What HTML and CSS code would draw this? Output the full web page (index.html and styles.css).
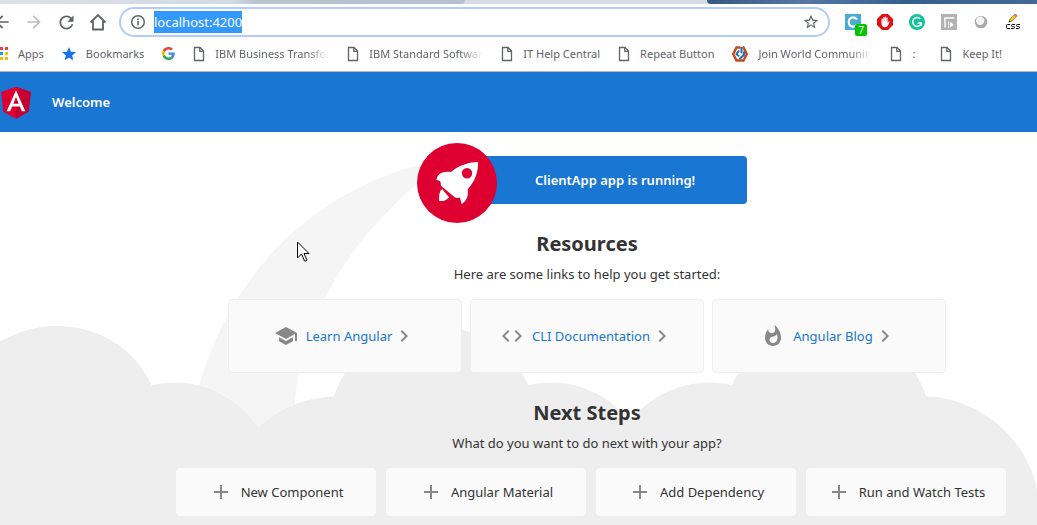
FILE: index.html
```
<!DOCTYPE html>
<html lang="en">
<head>
<meta charset="utf-8">
<meta name="viewport" content="width=device-width, initial-scale=1">
<title>ClientApp</title>
<link rel="stylesheet" href="styles.css">
</head>
<body>
	<svg class="defs" width="0" height="0">
		<symbol id="page" viewBox="0 0 12 16">
			<path d="M1.500 1.500h5.500l3.500 3.500v9.500h-9z" fill="#fff" stroke="#5f6368" stroke-width="1.300"/>
			<path d="M6.800 1.500v3.800h3.700" fill="none" stroke="#5f6368" stroke-width="1.300"/>
		</symbol>
		<symbol id="chevron" viewBox="0 0 24 24">
			<path d="M10 6L8.590 7.410 13.170 12l-4.580 4.590L10 18l6-6z"/>
		</symbol>
		<symbol id="plus" viewBox="0 0 24 24">
			<path d="M19 13h-6v6h-2v-6H5v-2h6V5h2v6h6v2z"/>
		</symbol>
	</svg>

	<header class="browser">
		<div class="tabs">
			<div class="tab tab-left"></div>
			<div class="tab-active"></div>
			<div class="tab tab-right"></div>
		</div>
		<div class="nav-row">
			<button class="nav-btn" aria-label="Back">
				<svg width="20" height="20" viewBox="0 0 24 24" fill="#5f6368"><path d="M20 11H7.830l5.590-5.590L12 4l-8 8 8 8 1.410-1.410L7.830 13H20v-2z"/></svg>
			</button>
			<button class="nav-btn" aria-label="Forward">
				<svg width="20" height="20" viewBox="0 0 24 24" fill="#babcbe"><path d="M12 4l-1.410 1.410L16.170 11H4v2h12.170l-5.580 5.590L12 20l8-8z"/></svg>
			</button>
			<button class="nav-btn" aria-label="Reload">
				<svg width="21" height="21" viewBox="0 0 24 24" fill="#5f6368"><path d="M17.650 6.350C16.200 4.900 14.210 4 12 4c-4.420 0-7.990 3.580-7.990 8s3.570 8 7.990 8c3.730 0 6.840-2.550 7.730-6h-2.080c-.820 2.330-3.040 4-5.650 4-3.310 0-6-2.690-6-6s2.690-6 6-6c1.660 0 3.140.690 4.220 1.780L13 11h7V4l-2.350 2.350z"/></svg>
			</button>
			<button class="nav-btn" aria-label="Home">
				<svg width="20" height="20" viewBox="0 0 20 20" fill="none" stroke="#5f6368" stroke-width="1.800"><path d="M2.500 10.500L10 3l7.500 7.500M5 9v8.500h10V9"/></svg>
			</button>
			<div class="omnibox">
				<svg width="16" height="16" viewBox="0 0 16 16"><circle cx="8" cy="8" r="6.300" fill="none" stroke="#5f6368" stroke-width="1.500"/><path d="M7.200 7h1.600v4.500H7.200zM7.200 4.300h1.600v1.600H7.200z" fill="#5f6368"/></svg>
				<span class="url" role="textbox" aria-label="Address">localhost:4200</span>
				<button class="star" aria-label="Bookmark this page">
					<svg width="16" height="16" viewBox="1 1 22 22" fill="#5f6368"><path d="M22 9.240l-7.190-.620L12 2 9.190 8.630 2 9.240l5.460 4.730L5.820 21 12 17.270 18.180 21l-1.630-7.030L22 9.240zM12 15.400l-3.760 2.270 1-4.280-3.320-2.880 4.380-.380L12 6.100l1.710 4.040 4.380.380-3.320 2.880 1 4.280L12 15.400z"/></svg>
				</button>
			</div>
			<div class="extensions">
				<button class="ext" aria-label="Page checker">
					<svg width="16" height="16" viewBox="0 0 16 16"><path fill="#4aacd4" d="M0 0h16v16H0z"/><path d="M12 5.500C11 3.800 9.500 3.400 8 3.400c-2.600 0-4.200 1.900-4.200 4.600s1.600 4.600 4.200 4.600c1.500 0 3-.400 4-2" fill="none" stroke="#fff" stroke-width="2.200"/></svg>
					<span class="badge">7</span>
				</button>
				<button class="ext" aria-label="Ad blocker">
					<svg width="16" height="16" viewBox="0 0 16 16"><path fill="#e40d12" d="M5 0h6l5 5v6l-5 5H5l-5-5V5z"/><path fill="#fff" d="M4.500 5q.700-.800 1.300 0v2.500h.300V3.500q.700-.900 1.300 0v3.500h.300V3q.700-.900 1.300 0v4h.300V3.700q.700-.800 1.300 0v5l.900-1.300q.900-.500 1 .300L11 11.500q-.900 1.800-3 1.800-3.500 0-3.500-3.800z"/></svg>
				</button>
				<button class="ext" aria-label="Grammar checker">
					<svg width="16" height="16" viewBox="0 0 16 16"><circle cx="8" cy="8" r="8" fill="#15c39a"/><path d="M11.300 5A4.400 4.400 0 1 0 12.300 9.300M8.800 9h3.500v2.800" fill="none" stroke="#fff" stroke-width="1.500"/></svg>
				</button>
				<button class="ext" aria-label="Recorder">
					<svg width="16" height="16" viewBox="0 0 16 16"><path fill="#b2b2b2" d="M0 0h16v16H0z"/><path d="M4 13.500V4H13.500" fill="none" stroke="#fff" stroke-width="1.400"/><path d="M7.500 14V7" fill="none" stroke="#e8e8e8"/><path d="M9 8l4 2.700-4 2.700z" fill="#fff"/></svg>
				</button>
				<button class="ext" aria-label="Bubble">
					<svg width="16" height="16" viewBox="0 0 16 16"><circle cx="8" cy="8" r="6.300" fill="#a9a9a9"/><circle cx="7.200" cy="6.800" r="4.200" fill="#f4f4f4"/></svg>
				</button>
				<button class="ext" aria-label="CSS editor">
					<svg width="16" height="16" viewBox="0 0 16 16"><path d="M4 8l1-3 5-5 2 2-5 5z" fill="#f7c81e" stroke="#7a5b08" stroke-width=".600"/><path d="M9 1l1.500-1.500 2 2L11 3z" fill="#e06c7c"/><path d="M3.500 8.500l1-2 1 1z"/><path d="M5 10.500H2.500q-1 0-1 1V13.500q0 1 1 1H5M10 10.500H7.500q-1 0-1 1t1 1h1q1 0 1 1t-1 1H6M15 10.500h-2.500q-1 0-1 1t1 1h1q1 0 1 1t-1 1H11" fill="none" stroke="#000"/></svg>
				</button>
			</div>
		</div>
		<nav class="bookmarks">
			<a class="bookmark" href="#">
				<svg width="8" height="13" viewBox="0 0 8 13"><path fill="#ea4335" d="M0 0h3v3H0zM5 0h3v3H5z"/><path fill="#1a9af5" d="M0 5h3v3H0z"/><path fill="#fbbc05" d="M5 5h3v3H5zM0 10h3v3H0zM5 10h3v3H5z"/></svg>
				<span>Apps</span>
			</a>
			<a class="bookmark" href="#">
				<svg width="14" height="14" viewBox="2 2 20 20" fill="#1a73e8"><path d="M12 17.270L18.180 21l-1.640-7.030L22 9.240l-7.190-.610L12 2 9.190 8.630 2 9.240l5.460 4.730L5.820 21z"/></svg>
				<span>Bookmarks</span>
			</a>
			<a class="bookmark" href="#" aria-label="Google">
				<svg width="13" height="13" viewBox="0 0 48 48"><path fill="#ea4335" d="M24 9.500c3.540 0 6.710 1.220 9.210 3.600l6.850-6.850C35.900 2.380 30.470 0 24 0 14.620 0 6.510 5.380 2.560 13.220l7.980 6.190C12.430 13.720 17.740 9.500 24 9.500z"/><path fill="#4285f4" d="M46.980 24.550c0-1.570-.150-3.090-.380-4.550H24v9.020h12.940c-.580 2.960-2.260 5.480-4.780 7.180l7.730 6c4.510-4.180 7.090-10.360 7.090-17.650z"/><path fill="#fbbc05" d="M10.530 28.590A14.500 14.500 0 0 1 9.770 24c0-1.600.270-3.140.760-4.590l-7.980-6.190A23.900 23.900 0 0 0 0 24c0 3.880.920 7.540 2.560 10.780l7.970-6.190z"/><path fill="#34a853" d="M24 48c6.480 0 11.930-2.130 15.890-5.810l-7.730-6c-2.150 1.450-4.920 2.300-8.160 2.300-6.260 0-11.570-4.220-13.470-9.910l-7.980 6.190C6.510 42.620 14.620 48 24 48z"/></svg>
			</a>
			<a class="bookmark" href="#"><svg width="12" height="16"><use href="#page"/></svg><span class="fade">IBM Business Transformation</span></a>
			<a class="bookmark" href="#"><svg width="12" height="16"><use href="#page"/></svg><span class="fade">IBM Standard Software</span></a>
			<a class="bookmark" href="#"><svg width="12" height="16"><use href="#page"/></svg><span>IT Help Central</span></a>
			<a class="bookmark" href="#"><svg width="12" height="16"><use href="#page"/></svg><span>Repeat Button</span></a>
			<a class="bookmark" href="#">
				<svg width="16" height="16" viewBox="0 0 16 16"><path d="M7 14.500H4.500L1.200 8l3.300-6.500H8.500" fill="none" stroke="#c9471c" stroke-width="2.400"/><path d="M10.500 1.500h1L14.800 8l-3.300 6.500H7" fill="none" stroke="#c9471c" stroke-width="2.400"/><path d="M9.500 1v6.300M7 4.500L4.500 8 7 10.400M12 5.500v3.200L7.500 13" fill="none" stroke="#1b6fb0" stroke-width="2"/></svg>
				<span class="fade">Join World Community Grid</span>
			</a>
			<a class="bookmark" href="#"><svg width="12" height="16"><use href="#page"/></svg><span class="short">:</span></a>
			<a class="bookmark" href="#"><svg width="12" height="16"><use href="#page"/></svg><span>Keep It!</span></a>
		</nav>
	</header>

	<div class="app">
		<div class="toolbar">
			<svg class="logo" width="40" height="40" viewBox="0 0 250 250">
				<path fill="#dd0031" d="M125 30L31.900 63.200l14.200 123.100L125 230l78.900-43.700 14.200-123.100z"/>
				<path fill="#c3002f" d="M125 30v200l78.900-43.700 14.200-123.100z"/>
				<path fill="#fff" d="M125 52.100L66.800 182.600h21.700l11.700-29.200h49.400l11.700 29.200H183L125 52.100zm17 83.300h-34l17-40.900z"/>
			</svg>
			<span>Welcome</span>
		</div>

		<svg class="smoke" viewBox="0 0 516 1084">
			<path fill="#f5f5f5" d="M497.600 0S-4 74.600 0 729.300s342.800 201.700 342.800 201.700S251.600 706.300 235.800 621.300c-27.100-145.500-11.600-384.100 271.900-609.100C524.100-1.600 497.600 0 497.600 0z"/>
		</svg>
		<svg class="clouds" viewBox="0 0 2611 486">
			<path fill="#eee" d="M2522.400 229.500c10-93-77-171-168-149-52-114-225-105-264 15-75 3-140 59-152 133-30 2.800-66.700 9.800-93.500 26.200-26.800-16.400-63.500-23.400-93.500-26.200-12-74-77-130-152-133-39-120-212-129-264-15-54.100-13.100-106.800 9.200-138.500 48.900-31.700-39.700-84.400-62-138.500-48.900-52-114-225-105-264 15a162 162 0 0 0-103.100 43c-30.600-45.400-87.100-72.100-145.200-58-52-114-225-105-264 15-75 3-140 59-152 133V486h2392z"/>
		</svg>

		<main class="content">
			<div class="highlight">
				<svg class="rocket" width="80" height="80" viewBox="0 0 80 80">
					<circle cx="40" cy="40" r="40" fill="#dd0031"/>
					<path fill="#fff" fill-rule="evenodd" d="M61 19C53 19 42 22 34 29c-5-.500-9 0-12 2.500-1.500 1.500-2.500 3.500-2.500 5.500 2 0 3.500 1 4.300 2.500-.400 1.500 0 3 1 4L38 54.500c1.500.600 3 .500 4.500 0 1 1.500 1.500 3.500 2 6.500 5-2.500 7.200-8 6.200-14.500C58 38 61.500 29 61 19zM50 25a5.200 5.200 0 1 1 0 10.400 5.200 5.200 0 0 1 0-10.400z"/>
					<path fill="#fff" d="M25 46c-3 3-3.200 7.500-2.800 12 4 .300 7.300-.500 9.800-3.800z"/>
				</svg>
				<span>ClientApp app is running!</span>
			</div>

			<h2>Resources</h2>
			<p>Here are some links to help you get started:</p>
			<div class="cards">
				<a class="card" href="#">
					<svg width="24" height="24" viewBox="0 0 24 24"><path d="M5 13.180v4L12 21l7-3.820v-4L12 17l-7-3.820zM12 3L1 9l11 6 9-4.910V17h2V9L12 3z"/></svg>
					<span>Learn Angular</span>
					<svg width="24" height="24"><use href="#chevron"/></svg>
				</a>
				<a class="card" href="#">
					<svg width="24" height="24" viewBox="0 0 24 24"><path d="M9.400 16.600L4.800 12l4.600-4.600L8 6l-6 6 6 6 1.400-1.400zm5.200 0l4.600-4.600-4.600-4.600L16 6l6 6-6 6-1.400-1.400z"/></svg>
					<span>CLI Documentation</span>
					<svg width="24" height="24"><use href="#chevron"/></svg>
				</a>
				<a class="card" href="#">
					<svg width="24" height="24" viewBox="0 0 24 24"><path d="M13.500.670s.740 2.650.740 4.800c0 2.060-1.350 3.730-3.410 3.730-2.070 0-3.630-1.670-3.630-3.730l.030-.360C5.210 7.510 4 10.620 4 14c0 4.420 3.580 8 8 8s8-3.580 8-8C20 8.610 17.410 3.800 13.500.670zM11.710 19c-1.780 0-3.220-1.400-3.220-3.140 0-1.620 1.050-2.760 2.810-3.120 1.770-.360 3.600-1.210 4.620-2.580.390 1.290.590 2.650.590 4.040 0 2.650-2.150 4.800-4.800 4.800z"/></svg>
					<span>Angular Blog</span>
					<svg width="24" height="24"><use href="#chevron"/></svg>
				</a>
			</div>

			<h2>Next Steps</h2>
			<p>What do you want to do next with your app?</p>
			<div class="steps">
				<button class="step"><svg width="24" height="24"><use href="#plus"/></svg><span>New Component</span></button>
				<button class="step"><svg width="24" height="24"><use href="#plus"/></svg><span>Angular Material</span></button>
				<button class="step"><svg width="24" height="24"><use href="#plus"/></svg><span>Add Dependency</span></button>
				<button class="step"><svg width="24" height="24"><use href="#plus"/></svg><span>Run and Watch Tests</span></button>
			</div>
		</main>
	</div>

	<svg class="cursor" width="13" height="22" viewBox="0 0 13 22">
		<path d="M.500 1v16l4-4 3 7q2 .500 2.500-1l-3-6.500h5z" fill="#fff" stroke="#000"/>
	</svg>
</body>
</html>
```
FILE: styles.css
```
* {
	box-sizing: border-box;
}

body {
	margin: 0;
	font-family: "Noto Sans", "Open Sans", sans-serif;
	font-size: 13px;
	color: #333;
	background: #fff;
	overflow: hidden;
}

button {
	padding: 0;
	border: 0;
	background: none;
	font: inherit;
	color: inherit;
}

svg {
	display: block;
	flex: none;
}

.defs {
	position: absolute;
}

/* browser bars */
.browser {
	height: 72px;
	background: #fff;
	border-bottom: 1px solid #b6b4b6;
	overflow: hidden;
}

.tabs {
	display: flex;
	height: 4px;
	background: #d5dce5;
}

.tab-left {
	width: 465px;
	background: linear-gradient(90deg, #dbe1e9, #d3dae3 50%, #b8c3d0 55%, #b5c1ce);
	border-bottom-right-radius: 6px;
}

.tab-active {
	width: 242px;
}

.tab-right {
	flex: 1;
	background: linear-gradient(90deg, #37587f, #5578a6 30%, #34608f 60%, #44699a);
	border-bottom-left-radius: 6px;
}

.nav-row {
	display: flex;
	align-items: center;
	height: 36px;
	padding-right: 16px;
}

.nav-btn {
	display: flex;
	justify-content: center;
	width: 32px;
}

.nav-btn:first-child {
	justify-content: flex-start;
	width: 18px;
	margin-left: -8px;
	margin-right: 8px;
}

.omnibox {
	display: flex;
	flex: 1;
	align-items: center;
	height: 30px;
	margin-left: 5px;
	padding: 0 9px;
	border: 2px solid #b2cdfa;
	border-radius: 15px;
}

.url {
	margin-left: 8px;
	line-height: 22px;
	color: #fff;
	background: #3399ff;
}

.star {
	margin-left: auto;
}

.extensions {
	display: flex;
	gap: 16px;
	margin-left: 15px;
}

.ext {
	position: relative;
}

.badge {
	position: absolute;
	top: 10px;
	left: 10px;
	width: 12px;
	height: 12px;
	border-radius: 2px;
	background: #00c400;
	color: #fff;
	font-size: 10px;
	line-height: 12px;
}

.bookmarks {
	display: flex;
	align-items: center;
	gap: 18px;
	height: 27px;
	font-size: 11px;
}

.bookmark {
	display: flex;
	align-items: center;
	gap: 10px;
	color: #5f6368;
	text-decoration: none;
	white-space: nowrap;
}

.fade {
	width: 114px;
	overflow: hidden;
	-webkit-mask-image: linear-gradient(90deg, #000 80%, transparent);
	mask-image: linear-gradient(90deg, #000 80%, transparent);
}

.short {
	width: 10px;
}

/* app */
.app {
	position: relative;
	height: calc(100vh - 72px);
	overflow: hidden;
}

.toolbar {
	display: flex;
	align-items: center;
	gap: 16px;
	height: 60px;
	margin-left: -4px;
	color: #fff;
	background: #1976d2;
	font-weight: 600;
}

.smoke {
	position: absolute;
	z-index: -2;
	top: 91px;
	left: 181px;
	width: 258px;
}

.clouds {
	position: absolute;
	z-index: -1;
	bottom: -158px;
	left: -250px;
	width: 1920px;
}

.content {
	display: flex;
	flex-direction: column;
	align-items: center;
	padding: 24px 0 0 137px;
}

.highlight {
	display: flex;
	align-items: center;
	height: 48px;
	width: 330px;
	margin-left: -10px;
	background: linear-gradient(#1976d2, #1976d2) 10px 0 no-repeat;
	border-radius: 4px;
	color: #fff;
	font-weight: 600;
}

.rocket {
	margin: 6px 38px 0 0;
}

h2 {
	margin: 24px 0 0;
	font-size: 20px;
	line-height: 32px;
	font-weight: 700;
}

p {
	margin: 4px 0 15px;
	line-height: 20px;
}

.cards {
	display: flex;
	gap: 8px;
}

.card {
	display: flex;
	align-items: center;
	justify-content: center;
	width: 234px;
	height: 74px;
	border: 1px solid #eee;
	border-radius: 4px;
	background: #fafafa;
	color: #1976d2;
	text-decoration: none;
}

.card svg,
.step svg {
	fill: #888;
}

.card svg:first-child {
	margin-right: 8px;
}

.steps {
	display: flex;
	gap: 10px;
	padding-left: 8px;
}

.step {
	display: flex;
	align-items: center;
	justify-content: center;
	gap: 8px;
	width: 200px;
	height: 48px;
	border-radius: 4px;
	background: #fafafa;
}

.cursor {
	position: absolute;
	top: 241px;
	left: 297px;
}
```
